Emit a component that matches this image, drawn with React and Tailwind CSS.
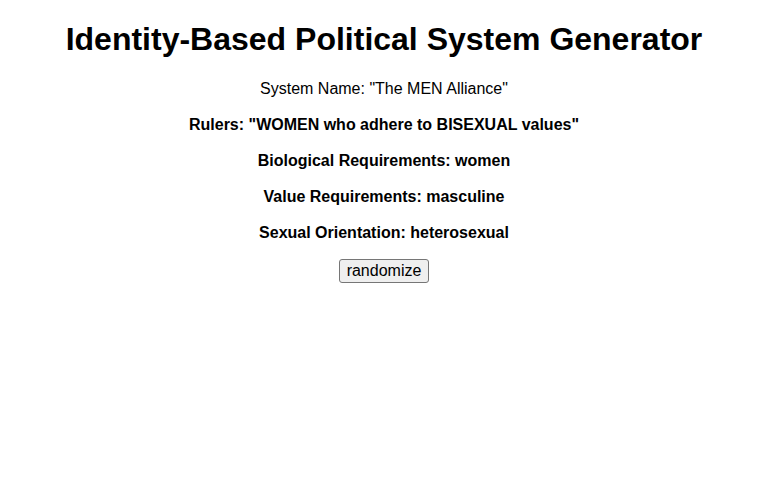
export default function App() {
  return (
    <div className="text-center text-black bg-white" style={{ fontFamily: '"Liberation Sans", Arial, sans-serif' }}>
      <div className="pt-[21.44px]">
        <h1 className="text-[32px] font-bold leading-[normal] mb-[21px]">Identity-Based Political System Generator</h1>
        <p className="text-base leading-[20px] mb-4">System Name: "The MEN Alliance"</p>
        <p className="text-base font-bold leading-[20px] mb-4">Rulers: "WOMEN who adhere to BISEXUAL values"</p>
        <p className="text-base font-bold leading-[20px] mb-4">Biological Requirements: women</p>
        <p className="text-base font-bold leading-[20px] mb-4">Value Requirements: masculine</p>
        <p className="text-base font-bold leading-[20px] mb-4">Sexual Orientation: heterosexual</p>
        <div>
          <button className="text-base leading-[20px] h-[24px] px-[7px] py-[1px] border border-[#767676] rounded-[3px] bg-[#efefef] text-black">randomize</button>
        </div>
      </div>
    </div>
  );
}
